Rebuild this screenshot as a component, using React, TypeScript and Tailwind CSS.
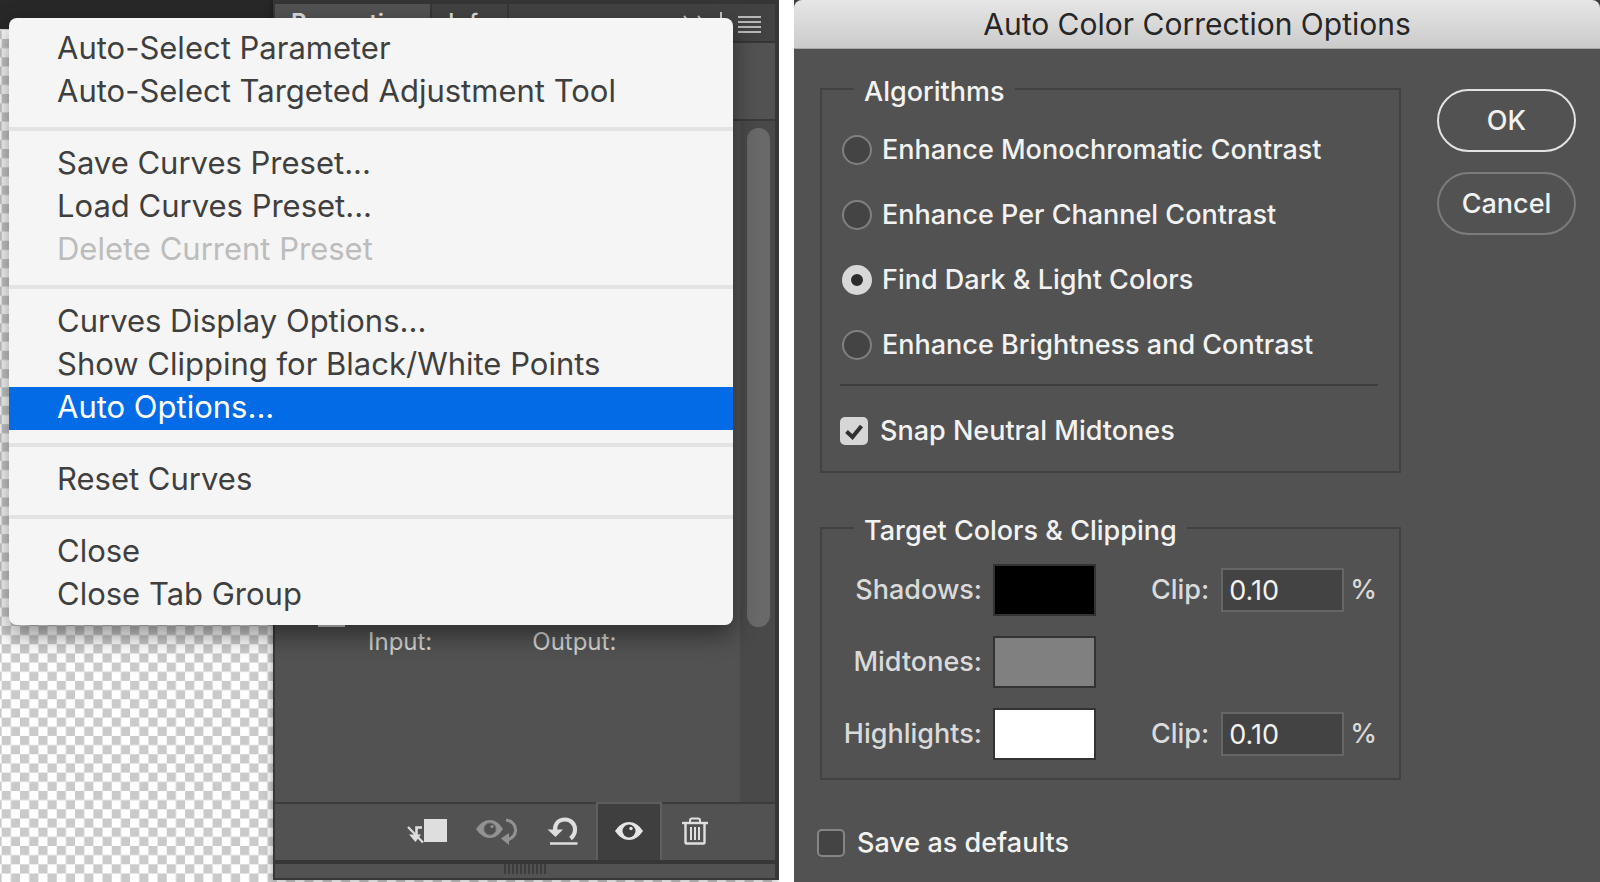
import { useState } from 'react';
import type { ReactNode } from 'react';
import { clsx } from 'clsx';

type MenuItem = { label: string; disabled?: boolean };

const MENU: MenuItem[][] = [
  [{ label: 'Auto-Select Parameter' }, { label: 'Auto-Select Targeted Adjustment Tool' }],
  [
    { label: 'Save Curves Preset...' },
    { label: 'Load Curves Preset...' },
    { label: 'Delete Current Preset', disabled: true },
  ],
  [
    { label: 'Curves Display Options...' },
    { label: 'Show Clipping for Black/White Points' },
    { label: 'Auto Options...' },
  ],
  [{ label: 'Reset Curves' }],
  [{ label: 'Close' }, { label: 'Close Tab Group' }],
];

const ALGORITHMS = [
  'Enhance Monochromatic Contrast',
  'Enhance Per Channel Contrast',
  'Find Dark & Light Colors',
  'Enhance Brightness and Contrast',
];

const TARGETS = [
  { id: 'shadows', label: 'Shadows:', swatch: 'bg-black', clip: '0.10' },
  { id: 'midtones', label: 'Midtones:', swatch: 'bg-[#808080]' },
  { id: 'highlights', label: 'Highlights:', swatch: 'bg-white', clip: '0.10' },
];

// Transparency grid behind the floating panel.
function Checkerboard() {
  return (
    <svg className="absolute inset-0 size-full" aria-hidden="true">
      <defs>
        <pattern id="checker" x="1.7" y="39" width="18.34" height="18.34" patternUnits="userSpaceOnUse">
          <rect width="18.34" height="18.34" fill="#fff" />
          <rect width="9.17" height="9.17" fill="#cacaca" />
          <rect x="9.17" y="9.17" width="9.17" height="9.17" fill="#cacaca" />
        </pattern>
      </defs>
      <rect width="100%" height="100%" fill="url(#checker)" />
    </svg>
  );
}

function ClipToLayerIcon() {
  return (
    <svg width="48" height="28" viewBox="0 0 48 28" fill="none">
      <rect x="17" y="2" width="23" height="23" fill="#dedede" />
      <path d="M1 10l15 15.5" stroke="#dedede" strokeWidth="2.2" />
      <path d="M15 10.500H9.500v9" stroke="#dedede" strokeWidth="2.6" />
      <path d="M2 17.500h12L8.500 25z" fill="#dedede" />
    </svg>
  );
}

function ViewPreviousIcon() {
  return (
    <svg width="44" height="30" viewBox="0 0 44 30" fill="none">
      <path d="M1 13C5 7 10 4 15 4s9 3 13 9c-4 6-8 9-13 9S5 19 1 13z" fill="#929292" />
      <circle cx="15" cy="13" r="6" fill="#505050" stroke="#6c6c6c" />
      <circle cx="17" cy="10.500" r="1.600" fill="#929292" />
      <path d="M31 4c7 1 10 6 9.500 11-.5 4-3 7-7 8.500" stroke="#929292" strokeWidth="3" />
      <path d="M26 22.500l8-5.500v12z" fill="#929292" />
    </svg>
  );
}

function ResetIcon() {
  return (
    <svg width="32" height="30" viewBox="0 0 32 30" fill="none">
      <path d="M8 14C8 7 12.500 3.500 18 3.500c6 0 10 4.500 10 10 0 4-2 7-4.500 9" stroke="#dedede" strokeWidth="4.200" />
      <path d="M.500 13.500h15.500L8.500 21z" fill="#dedede" />
      <path d="M3 27.500h27.500" stroke="#dedede" strokeWidth="2.500" />
    </svg>
  );
}

function EyeIcon() {
  return (
    <svg width="30" height="22" viewBox="0 0 30 22" fill="none">
      <path d="M1 11C5 5 10 2 15 2s10 3 14 9c-4 6-9 9-14 9S5 17 1 11z" fill="#e6e6e6" />
      <circle cx="15" cy="11" r="6.500" fill="#3f3f3f" />
      <circle cx="17" cy="8.500" r="1.700" fill="#e6e6e6" />
    </svg>
  );
}

function TrashIcon() {
  return (
    <svg width="26" height="30" viewBox="0 0 26 30" fill="none" stroke="#e0e0e0" strokeWidth="2">
      <path d="M0 7h26" strokeWidth="2.400" />
      <path d="M8 7V4.500Q8 2.500 10 2.500h6q2 0 2 2V7" />
      <path d="M3.500 7v19.500q0 1 1 1h17q1 0 1-1V7" strokeWidth="2.400" />
      <path d="M9 11v13M13 11v13M17 11v13" />
    </svg>
  );
}

function ToolButton({ label, active, children }: { label: string; active?: boolean; children: ReactNode }) {
  return (
    <button
      type="button"
      aria-label={label}
      className={clsx(
        'flex w-[66px] items-center justify-center pb-[3px]',
        active && '-mt-0.5 border-x-2 border-t-2 border-[#5f5f5f] bg-[#3f3f3f]',
      )}
    >
      {children}
    </button>
  );
}

function PropertiesPanel() {
  return (
    <section className="relative ml-[273px] flex flex-1 flex-col border-l-2 border-r-4 border-[#373737] bg-[#525252] shadow-[0_0_8px_rgba(0,0,0,0.4)]">
      <div className="flex h-[43px] items-stretch border-t-4 border-b-2 border-[#353535] bg-[#424242] text-[24px] leading-[38px] text-[#dcdcdc]">
        <div className="w-[155px] bg-[#525252] pl-4 font-semibold">Properties</div>
        <div className="w-[79px] border-x-2 border-[#353535] pl-4 font-medium">Info</div>
        <div className="ml-auto flex items-start gap-[9px] pr-3.5">
          <svg width="48" height="30" viewBox="0 0 48 30" fill="none" stroke="#c4c4c4" strokeWidth="2">
            <path d="M3 12l5 6-5 6M17 12l5 6-5 6M40 8v16" />
          </svg>
          <button type="button" aria-label="Panel menu" className="mt-3 flex w-[23px] flex-col gap-[3px]">
            <span className="h-0.5 w-full bg-[#b8b8b8]" />
            <span className="h-0.5 w-full bg-[#b8b8b8]" />
            <span className="h-0.5 w-full bg-[#b8b8b8]" />
            <span className="h-0.5 w-full bg-[#b8b8b8]" />
          </button>
        </div>
      </div>
      <div className="h-[78px] border-b-2 border-[#3a3a3a]" />
      <div className="flex flex-1">
        <div className="flex flex-1 flex-col pt-[480px] pl-[43px]">
          <span className="h-[26px] w-[27px] bg-[#d0d0d0]" />
          <div className="flex gap-[100px] pl-[50px] text-[24px] leading-[30px] text-[#d2d2d2]">
            <span>Input:</span>
            <span>Output:</span>
          </div>
        </div>
        <div className="flex w-[35px] justify-end bg-[#494949] pt-[7px] pr-[5px]">
          <div className="h-[499px] w-[23px] rounded-full bg-[#696969]" />
        </div>
      </div>
      <div className="flex h-[58px] justify-end border-t-2 border-[#3c3c3c] pr-[47px]">
        <ToolButton label="Clip to layer"><ClipToLayerIcon /></ToolButton>
        <ToolButton label="View previous state"><ViewPreviousIcon /></ToolButton>
        <ToolButton label="Reset"><ResetIcon /></ToolButton>
        <ToolButton label="Toggle visibility" active><EyeIcon /></ToolButton>
        <ToolButton label="Delete"><TrashIcon /></ToolButton>
      </div>
      <div className="flex h-5 justify-center gap-0.5 border-t-4 border-b-2 border-[#373737] pb-1">
        {Array.from({ length: 11 }, (_, i) => (
          <span key={i} className="w-0.5 bg-[#3d3d3d]" />
        ))}
      </div>
    </section>
  );
}

function CurvesMenu() {
  const [active, setActive] = useState('Auto Options...');

  return (
    <div
      role="menu"
      className="absolute top-[18px] right-[46px] left-[9px] rounded-lg bg-[#f5f5f5] pt-[10px] pb-2 text-[31px] text-[#3f3f3f] shadow-[0_10px_24px_rgba(0,0,0,0.45)]"
    >
      {MENU.map((group, i) => (
        <div key={i} role="group">
          {i > 0 && (
            <div className="flex h-[29px] items-center">
              <div className="h-1 w-full bg-[#e3e3e3]" />
            </div>
          )}
          {group.map((item) => (
            <button
              key={item.label}
              type="button"
              role="menuitem"
              disabled={item.disabled}
              onClick={() => setActive(item.label)}
              className={clsx(
                'block w-full pb-1 pl-[48px] text-left leading-[39px]',
                item.disabled && 'text-[#bcbcbc]',
                active === item.label && 'bg-[#036be6] text-white',
              )}
            >
              {item.label}
            </button>
          ))}
        </div>
      ))}
    </div>
  );
}

function CheckBox({ label, defaultChecked }: { label: string; defaultChecked?: boolean }) {
  return (
    <label className="flex h-7 items-center gap-3">
      <span className="relative size-7">
        <input
          type="checkbox"
          defaultChecked={defaultChecked}
          className="peer block size-7 appearance-none rounded-[5px] border-2 border-[#858585] bg-[#444] checked:border-[#d6d6d6] checked:bg-[#d6d6d6]"
        />
        <svg
          viewBox="0 0 28 28"
          fill="none"
          className="pointer-events-none absolute inset-0 hidden size-7 peer-checked:block"
        >
          <path d="M6.500 14.500l6 5.500 9-11" stroke="#303030" strokeWidth="4" />
        </svg>
      </span>
      {label}
    </label>
  );
}

function ColorCorrectionDialog() {
  return (
    <div className="flex flex-col bg-[#3a3a3a]">
      <h1 className="h-[49px] rounded-t-lg border-b border-[#a8a8a8] bg-linear-to-b from-[#e6e6e6] to-[#cbcbcb] text-center text-[30px] leading-[48px] text-[#262626]">
        Auto Color Correction Options
      </h1>
      <form
        className="flex flex-1 items-start gap-9 bg-[#525252] pt-[21px] pr-6 pl-[26px] text-[27px] leading-8 font-medium text-[#f2f2f2]"
        onSubmit={(e) => e.preventDefault()}
      >
        <div className="flex-1">
          <fieldset className="border-2 border-[#424242] pr-[21px] pb-[26px] pl-[18px]">
            <legend className="ml-[14px] px-[10px] pt-1.5">Algorithms</legend>
            <div className="flex flex-col gap-[35px] pt-[27px] pl-0.5">
              {ALGORITHMS.map((name, i) => (
                <label key={name} className="flex h-[30px] items-center gap-[10px]">
                  <input
                    type="radio"
                    name="algorithm"
                    defaultChecked={i === 2}
                    className="size-[30px] appearance-none rounded-full border-2 border-[#808080] bg-[#444] checked:border-[9px] checked:border-[#d8d8d8] checked:bg-[#2c2c2c]"
                  />
                  {name}
                </label>
              ))}
            </div>
            <hr className="mt-6 mb-[31px] border-t-2 border-[#3e3e3e]" />
            <CheckBox label="Snap Neutral Midtones" defaultChecked />
          </fieldset>

          <fieldset className="mt-9 border-2 border-[#424242] pr-[22px] pb-[18px]">
            <legend className="ml-8 px-[10px] pt-1.5">Target Colors &amp; Clipping</legend>
            <div className="flex flex-col gap-5 pt-[17px] text-[#dadada]">
              {TARGETS.map((t) => (
                <div key={t.id} className="flex h-[52px] items-center">
                  <label htmlFor={t.id} className="w-[160px] text-right">
                    {t.label}
                  </label>
                  <button
                    id={t.id}
                    type="button"
                    className={clsx('ml-[11px] h-[52px] w-[103px] border-2 border-[#333]', t.swatch)}
                  />
                  {t.clip && (
                    <div className="ml-auto flex items-center">
                      <label htmlFor={`${t.id}-clip`}>Clip:</label>
                      <input
                        id={`${t.id}-clip`}
                        defaultValue={t.clip}
                        className="ml-3 h-11 w-[123px] border-2 border-[#666] bg-[#434343] pl-1.5 font-normal text-[#f2f2f2]"
                      />
                      <span className="ml-1.5">%</span>
                    </div>
                  )}
                </div>
              ))}
            </div>
          </fieldset>

          <div className="mt-[49px] -ml-[3px]">
            <CheckBox label="Save as defaults" />
          </div>
        </div>
        <div className="mt-[19px] flex w-[139px] flex-col gap-5">
          <button type="submit" className="h-[63px] rounded-full border-2 border-[#e2e2e2]">
            OK
          </button>
          <button type="button" className="h-[63px] rounded-full border-2 border-[#7c7c7c]">
            Cancel
          </button>
        </div>
      </form>
    </div>
  );
}

export default function App() {
  return (
    <main className="grid min-h-screen grid-cols-[779fr_806fr] gap-[15px] bg-white font-['Inter',sans-serif]">
      <div className="relative flex flex-col overflow-hidden pb-0.5">
        <Checkerboard />
        <div className="absolute inset-x-0 top-0 h-[29px] bg-[#282828]" />
        <PropertiesPanel />
        <CurvesMenu />
      </div>
      <ColorCorrectionDialog />
    </main>
  );
}
